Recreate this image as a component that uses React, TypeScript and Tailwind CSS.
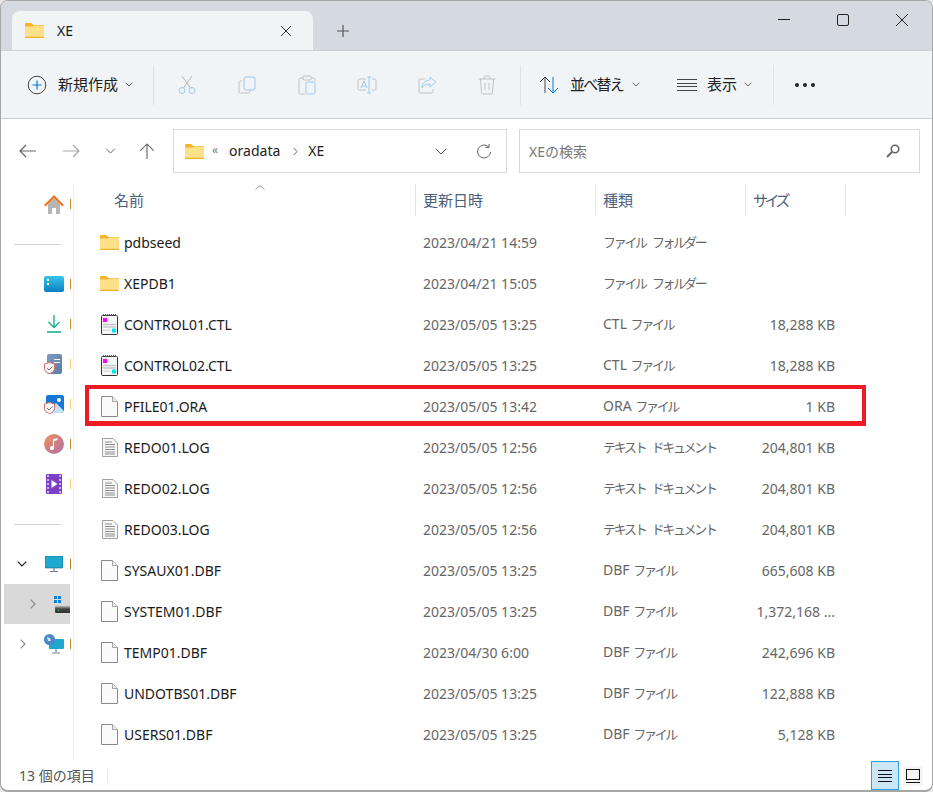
import type { ReactNode } from 'react';

const FONT = "font-['Noto_Sans','Noto_Sans_CJK_JP',sans-serif]";

const Folder = ({ className = 'w-[19px] h-[15px]' }: { className?: string }) => (
  <svg viewBox="0 0 19 15" className={className}>
    <path d="M0 1.2C0 .5.5 0 1.2 0h4.6c.5 0 .8.2 1.1.5L8.5 2H18c.6 0 1 .4 1 1v2H0z" fill="#f5b52a" />
    <path d="M0 3.6h7.6L9 2.6h9c.6 0 1 .4 1 1V14c0 .6-.4 1-1 1H1c-.6 0-1-.4-1-1z" fill="#fde08a" />
    <path d="M0 13.8h19V14c0 .6-.4 1-1 1H1c-.6 0-1-.4-1-1z" fill="#eeb12f" />
  </svg>
);

const BlankFile = () => (
  <svg viewBox="0 0 17 21" className="w-[17px] h-[21px]">
    <path d="M.5.5h11l5 5v15H.5z" fill="#fafafa" stroke="#8a8a8a" />
    <path d="M11.5.5v5h5" fill="#f0f0f0" stroke="#a5a5a5" />
  </svg>
);

const TextFile = () => (
  <svg viewBox="0 0 16 19" className="w-[16px] h-[19px]">
    <path d="M.5.5h10.5l4.5 4.5v13.5H.5z" fill="#f8f8f8" stroke="#a0a0a0" />
    <path d="M3 4h7M3 6.500h10M3 9h10M3 11.500h10M3 14h10M3 16h10" stroke="#8c8c8c" fill="none" />
  </svg>
);

const ConfigFile = () => (
  <svg viewBox="0 0 17 21" className="w-[17px] h-[21px]">
    <rect x=".5" y="1.5" width="16" height="19" rx="1" fill="#f6f6f6" stroke="#333" />
    <path d="M2 1h13" stroke="#555" strokeDasharray="1 1" strokeWidth="2" />
    <rect x="2" y="4" width="4" height="4" fill="#f0f" />
    <rect x="11" y="14.5" width="4" height="4" fill="#00e5ee" />
    <path d="M2 10.500h13M2 13h13" stroke="#c8c8c8" strokeWidth="1.4" />
    <path d="M2 16h8" stroke="#dcdcdc" strokeWidth="1.4" />
  </svg>
);

const Chevron = ({ className = '' }: { className?: string }) => (
  <svg viewBox="0 0 8 5" className={`w-[8px] h-[5px] ${className}`}>
    <path d="M.7.7 4 4 7.3.7" fill="none" stroke="#666" strokeWidth="1" />
  </svg>
);

const files = [
  { name: 'pdbseed', date: '2023/04/21 14:59', ext: '', kana: 'ファイル フォルダー', size: '', icon: 'folder' },
  { name: 'XEPDB1', date: '2023/04/21 15:05', ext: '', kana: 'ファイル フォルダー', size: '', icon: 'folder' },
  { name: 'CONTROL01.CTL', date: '2023/05/05 13:25', ext: 'CTL ', kana: 'ファイル', size: '18,288 KB', icon: 'config' },
  { name: 'CONTROL02.CTL', date: '2023/05/05 13:25', ext: 'CTL ', kana: 'ファイル', size: '18,288 KB', icon: 'config' },
  { name: 'PFILE01.ORA', date: '2023/05/05 13:42', ext: 'ORA ', kana: 'ファイル', size: '1 KB', icon: 'blank', marked: true },
  { name: 'REDO01.LOG', date: '2023/05/05 12:56', ext: '', kana: 'テキスト ドキュメント', size: '204,801 KB', icon: 'text' },
  { name: 'REDO02.LOG', date: '2023/05/05 12:56', ext: '', kana: 'テキスト ドキュメント', size: '204,801 KB', icon: 'text' },
  { name: 'REDO03.LOG', date: '2023/05/05 12:56', ext: '', kana: 'テキスト ドキュメント', size: '204,801 KB', icon: 'text' },
  { name: 'SYSAUX01.DBF', date: '2023/05/05 13:25', ext: 'DBF ', kana: 'ファイル', size: '665,608 KB', icon: 'blank' },
  { name: 'SYSTEM01.DBF', date: '2023/05/05 13:25', ext: 'DBF ', kana: 'ファイル', size: '1,372,168 ...', icon: 'blank' },
  { name: 'TEMP01.DBF', date: '2023/04/30 6:00', ext: 'DBF ', kana: 'ファイル', size: '242,696 KB', icon: 'blank' },
  { name: 'UNDOTBS01.DBF', date: '2023/05/05 13:25', ext: 'DBF ', kana: 'ファイル', size: '122,888 KB', icon: 'blank' },
  { name: 'USERS01.DBF', date: '2023/05/05 13:25', ext: 'DBF ', kana: 'ファイル', size: '5,128 KB', icon: 'blank' },
];

const FileIcon = ({ kind }: { kind: string }) => {
  if (kind === 'folder') return <Folder />;
  if (kind === 'config') return <ConfigFile />;
  if (kind === 'text') return <TextFile />;
  return <BlankFile />;
};

const Shield = () => (
  <svg viewBox="0 0 11 12" className="absolute left-0 bottom-0 w-[11px] h-[12px]">
    <path d="M5.500.5 10.500 2v4c0 3-2.500 5-5 5.500C3 11 .5 9 .5 6V2z" fill="#fff" stroke="#d9686a" />
    <path d="m3 6 2 2 3.500-3.500" fill="none" stroke="#777" />
  </svg>
);

const SideItem = ({ arrow, icon, mark, selected }: { arrow?: 'down' | 'right'; icon: ReactNode; mark?: string; selected?: boolean }) => (
  <div className={`h-10 shrink-0 flex items-center relative mx-[3px] ${selected ? 'bg-[#d9d9d9]' : ''}`}>
    {arrow === 'down' && (
      <svg viewBox="0 0 10 6" className="absolute left-[13px] w-[10px] h-[6px]">
        <path d="M.7.7 5 5 9.300.7" fill="none" stroke="#222" strokeWidth="1.200" />
      </svg>
    )}
    {arrow === 'right' && (
      <svg viewBox="0 0 6 10" className={`absolute w-[6px] h-[10px] ${selected ? 'left-[26px]' : 'left-[16px]'}`}>
        <path d="M.7.7 5 5 .7 9.300" fill="none" stroke="#8a8a8a" strokeWidth="1.200" />
      </svg>
    )}
    {icon}
    {mark && <div className={`absolute left-[66px] w-px h-2.5 ${mark}`} />}
  </div>
);

const ToolIcon = ({ children }: { children: ReactNode }) => (
  <div className="w-[60px] h-[40px] flex items-center justify-center">
    <svg viewBox="0 0 20 20" className="w-5 h-5" fill="none" strokeWidth="1">
      {children}
    </svg>
  </div>
);

const Divider = () => <div className="w-px h-[40px] bg-[#dfe2e5]" />;

export default function App() {
  return (
    <div className={`${FONT} w-[933px] h-[792px] bg-[#e8e8e8] overflow-hidden`}>
      <div className="w-full h-full flex flex-col overflow-hidden rounded-t-[8px] rounded-b-[8px] border border-b-2 border-[#a6a6a6] bg-white">
        {/* tab strip */}
        <div className="h-[50px] shrink-0 bg-[#d5dae0] flex items-end border-b border-[#cdd1d5] pl-[11px]">
          <div className="w-[301px] h-[39px] bg-[#f1f4f6] rounded-t-[8px] flex items-center pl-[13px] pr-[21px]">
            <Folder />
            <span className="ml-[13px] text-[14px] text-[#1a1a1a]">XE</span>
            <svg viewBox="0 0 12 12" className="ml-auto w-3 h-3">
              <path d="M1 1l10 10M11 1 1 11" stroke="#333" strokeWidth="1" />
            </svg>
          </div>
          <div className="h-[39px] flex items-center ml-[24px]">
            <svg viewBox="0 0 12 12" className="w-3 h-3">
              <path d="M6 0v12M0 6h12" stroke="#555" strokeWidth="1.200" />
            </svg>
          </div>
          <div className="ml-auto h-[50px] flex items-center self-start pb-[13px]">
            <div className="w-3 h-px bg-[#222] mr-[47px]" />
            <div className="w-3 h-3 border border-[#222] rounded-[2px] mr-[47px]" />
            <svg viewBox="0 0 12 12" className="w-3 h-3 mr-[24px]">
              <path d="M0 0l12 12M12 0 0 12" stroke="#222" strokeWidth="1" />
            </svg>
          </div>
        </div>

        {/* command bar */}
        <div className="h-[68px] shrink-0 bg-[#f1f4f6] border-b border-[#c9cccf] flex items-center pl-[26px]">
          <svg viewBox="0 0 20 20" className="w-5 h-5" fill="none">
            <circle cx="10" cy="10" r="8.800" stroke="#444" />
            <path d="M10 5.500v9M5.500 10h9" stroke="#0a78d4" strokeWidth="1.200" />
          </svg>
          <span className="ml-[11px] text-[15px] text-[#222]">新規作成</span>
          <Chevron className="ml-[7px] mr-[20px]" />
          <Divider />
          <div className="flex ml-[3px]">
            <ToolIcon>
              <path d="M5 1l8.500 12M15 1 6.500 13" stroke="#b6b6b6" />
              <circle cx="5" cy="15.500" r="3" stroke="#9cc9ee" />
              <circle cx="15" cy="15.500" r="3" stroke="#9cc9ee" />
            </ToolIcon>
            <ToolIcon>
              <path d="M5 6H3.500A1.500 1.500 0 0 0 2 7.500v9A1.500 1.500 0 0 0 3.500 18h8a1.500 1.500 0 0 0 1.500-1.500V15" stroke="#c0c0c0" />
              <rect x="7" y="2" width="11" height="13" rx="2" stroke="#9cc9ee" />
            </ToolIcon>
            <ToolIcon>
              <path d="M6 3H3.500A1.500 1.500 0 0 0 2 4.500v13A1.500 1.500 0 0 0 3.500 19H8M14 3h2.500A1.500 1.500 0 0 1 18 4.500V6" stroke="#c0c0c0" />
              <rect x="6" y="1" width="8" height="4" rx="1" stroke="#c0c0c0" />
              <rect x="9" y="7" width="9" height="12" rx="1.500" stroke="#9cc9ee" />
            </ToolIcon>
            <ToolIcon>
              <path d="M9 4H2.500A1.500 1.500 0 0 0 1 5.500v8A1.500 1.500 0 0 0 2.500 15H9M15 4h2.500A1.500 1.500 0 0 1 19 5.500v8a1.500 1.500 0 0 1-1.500 1.500H15" stroke="#c0c0c0" />
              <path d="M4 13l3-7 3 7M5 11h4M10 2h4M12 2v16M10 18h4" stroke="#9cc9ee" />
            </ToolIcon>
            <ToolIcon>
              <path d="M8 4H3.500A1.500 1.500 0 0 0 2 5.500v11A1.500 1.500 0 0 0 3.500 18h11a1.500 1.500 0 0 0 1.500-1.500V14" stroke="#c0c0c0" />
              <path d="M13 2l6 5-6 5V9c-4 0-6 1-8 4 0-5 3-7.500 8-8z" stroke="#9cc9ee" />
            </ToolIcon>
            <ToolIcon>
              <path d="M1.500 4h17M7 4V2.500A1.500 1.500 0 0 1 8.500 1h3A1.500 1.500 0 0 1 13 2.500V4M3.500 4l1 13.500A1.500 1.500 0 0 0 6 19h8a1.500 1.500 0 0 0 1.500-1.500l1-13.500M8 8v7M12 8v7" stroke="#c0c0c0" />
            </ToolIcon>
          </div>
          <div className="ml-[3px]"><Divider /></div>
          <svg viewBox="0 0 20 20" className="w-5 h-5 ml-[18px]" fill="none">
            <path d="M6 18V2M1 7l5-5 5 5" stroke="#444" />
            <path d="M14 2v16M9 13l5 5 5-5" stroke="#0a78d4" />
          </svg>
          <span className="ml-[11px] text-[15px] tracking-[-1.750px] text-[#222]">並べ替え</span>
          <Chevron className="ml-[9px]" />
          <svg viewBox="0 0 20 12" className="w-5 h-3 ml-[37px]">
            <path d="M0 .5h20M0 4.500h20M0 7.500h20M0 11.500h20" stroke="#444" />
          </svg>
          <span className="ml-[10px] text-[15px] text-[#222]">表示</span>
          <Chevron className="ml-[7px] mr-[21px]" />
          <Divider />
          <div className="ml-[21px] flex gap-1">
            <div className="w-1 h-1 rounded-full bg-[#222]" />
            <div className="w-1 h-1 rounded-full bg-[#222]" />
            <div className="w-1 h-1 rounded-full bg-[#222]" />
          </div>
        </div>

        {/* address row */}
        <div className="h-[65px] shrink-0 flex items-center pl-[18px] pb-[1px]">
          <svg viewBox="0 0 18 14" className="w-[18px] h-[14px]" fill="none">
            <path d="M1 7h16M7 1 1 7l6 6" stroke="#666" strokeWidth="1.200" />
          </svg>
          <svg viewBox="0 0 18 14" className="w-[18px] h-[14px] ml-[26px]" fill="none">
            <path d="M0 7h16M10 1l6 6-6 6" stroke="#a8a8a8" strokeWidth="1.200" />
          </svg>
          <svg viewBox="0 0 10 6" className="w-[11px] h-[6px] ml-[24px]" fill="none">
            <path d="M.7.7 5 5 9.300.7" stroke="#666" />
          </svg>
          <svg viewBox="0 0 16 18" className="w-[16px] h-[17px] ml-[23px]" fill="none">
            <path d="M8 17V1M1 8l7-7 7 7" stroke="#666" strokeWidth="1.200" />
          </svg>
          <div className="ml-[18px] w-[334px] h-[44px] border border-[#d9d9d9] flex items-center pl-[11px] pr-[14px]">
            <Folder />
            <span className="ml-[8px] text-[12px] text-[#777] leading-none pb-0.5">«</span>
            <span className="ml-[11px] text-[14px] text-[#222] pb-px">oradata</span>
            <svg viewBox="0 0 6 10" className="w-[5px] h-[9px] ml-[13px]" fill="none">
              <path d="M.7.7 5 5 .7 9.300" stroke="#666" strokeWidth="1.200" />
            </svg>
            <span className="ml-[10px] text-[14px] text-[#222] pb-px">XE</span>
            <svg viewBox="0 0 12 7" className="ml-auto mr-[29px] w-3 h-[7px]" fill="none">
              <path d="M.7.7 6 6 11.300.7" stroke="#555" />
            </svg>
            <svg viewBox="0 0 16 16" className="w-4 h-4" fill="none">
              <path d="M13 1v3.500H9.500M12.600 3.900A6.500 6.500 0 1 0 14.500 9" stroke="#666" />
            </svg>
          </div>
          <div className="ml-[12px] w-[401px] h-[44px] border border-[#d9d9d9] flex items-center pl-[9px] pr-[19px]">
            <span className="text-[14px] text-[#777]">XEの検索</span>
            <svg viewBox="0 0 14 14" className="ml-auto w-[14px] h-[14px]" fill="none">
              <circle cx="9" cy="5" r="3.800" stroke="#666" strokeWidth="1.600" />
              <path d="M6 8 1 13" stroke="#666" strokeWidth="2" />
            </svg>
          </div>
        </div>

        {/* body */}
        <div className="flex-1 min-h-0 flex">
          <div className="w-[73px] shrink-0 flex flex-col border-r border-[#eeeeee]">
            <SideItem
              mark="bg-[#c98a2c]"
              icon={
                <svg viewBox="0 0 20 19" className="w-5 h-[19px] ml-[40px]">
                  <path d="M4 9v9a1 1 0 0 0 1 1h3v-6h4v6h3a1 1 0 0 0 1-1V9l-6-6z" fill="#b5b5b5" />
                  <path d="M0 10 10 0l10 10-1.500 1.500L10 3l-8.500 8.500z" fill="#e8751a" />
                </svg>
              }
            />
            <div className="h-10 shrink-0 flex items-center pl-[13px]">
              <div className="w-[47px] h-px bg-[#d4d4d4]" />
            </div>
            <SideItem
              mark="bg-[#c98a2c]"
              icon={
                <div className="ml-[40px] w-5 h-4 rounded-[2px] bg-gradient-to-b from-[#39c4ea] to-[#0a7fc0] relative">
                  <div className="absolute left-[3px] top-[3px] w-[2px] h-[2px] bg-white" />
                  <div className="absolute left-[3px] top-[7px] w-[2px] h-[2px] bg-white" />
                </div>
              }
            />
            <SideItem
              mark="bg-[#c98a2c]"
              icon={
                <svg viewBox="0 0 14 18" className="w-[14px] h-[18px] ml-[43px]" fill="none">
                  <path d="M7 0v12M1.500 7 7 12.500 12.500 7" stroke="#1eb18e" strokeWidth="1.400" />
                  <path d="M0 17h14" stroke="#1eb18e" strokeWidth="1.600" />
                </svg>
              }
            />
            <SideItem
              mark="bg-[#f0d27a]"
              icon={
                <div className="ml-[40px] w-[18px] h-[20px] relative">
                  <div className="absolute right-0 top-0 w-[15px] h-5 rounded-[2px] bg-gradient-to-br from-[#7d9cc0] to-[#5a7ca5]">
                    <div className="absolute left-[7px] top-[5px] w-[6px] h-px bg-white" />
                    <div className="absolute left-[7px] top-[8px] w-[6px] h-px bg-white" />
                  </div>
                  <Shield />
                </div>
              }
            />
            <SideItem
              mark="bg-[#f0d27a]"
              icon={
                <div className="ml-[40px] w-[20px] h-[19px] relative">
                  <svg viewBox="0 0 18 18" className="absolute right-0 top-0 w-[18px] h-[18px]">
                    <rect width="18" height="18" rx="2" fill="#1579d4" />
                    <circle cx="13" cy="5" r="2" fill="#fff" />
                    <path d="M2 18 10 8l8 8v2z" fill="#bfe2f8" />
                  </svg>
                  <Shield />
                </div>
              }
            />
            <SideItem
              mark="bg-[#c98a2c]"
              icon={
                <div className="ml-[40px] w-5 h-5 rounded-full bg-gradient-to-br from-[#ee8f4e] to-[#b06fa8] flex items-center justify-center">
                  <svg viewBox="0 0 10 12" className="w-[10px] h-3">
                    <path d="M4 1.500 8.500 0v2L5 3v7a2 2 0 1 1-1-1.700z" fill="#fff" />
                  </svg>
                </div>
              }
            />
            <SideItem
              mark="bg-[#f0d27a]"
              icon={
                <svg viewBox="0 0 16 20" className="w-4 h-5 ml-[42px]">
                  <rect width="16" height="20" rx="1" fill="#7d3fc4" />
                  <path d="M1 2h2M1 6h2M1 10h2M1 14h2M1 18h2M13 2h2M13 6h2M13 10h2M13 14h2M13 18h2" stroke="#e9d9f8" strokeWidth="1.400" />
                  <path d="M5.500 6v8l6-4z" fill="#fff" />
                </svg>
              }
            />
            <div className="h-10 shrink-0 flex items-center pl-[13px]">
              <div className="w-[47px] h-px bg-[#d4d4d4]" />
            </div>
            <SideItem
              arrow="down"
              mark="bg-[#b97a20]"
              icon={
                <svg viewBox="0 0 18 16" className="w-[18px] h-4 ml-[41px]">
                  <rect width="18" height="12" rx="1" fill="#1fa9cf" stroke="#0f5f80" strokeWidth=".6" />
                  <path d="M9 12v3M5 15.500h8" stroke="#6b8596" strokeWidth="1.200" />
                </svg>
              }
            />
            <SideItem
              selected
              arrow="right"
              icon={
                <div className="ml-[50px] w-[17px] h-[17px] relative overflow-hidden">
                  <div className="absolute left-0 top-0 grid grid-cols-2 gap-px w-[7px]">
                    <div className="h-[3px] bg-[#0a84d8]" />
                    <div className="h-[3px] bg-[#0a84d8]" />
                    <div className="h-[3px] bg-[#0a84d8]" />
                    <div className="h-[3px] bg-[#0a84d8]" />
                  </div>
                  <div className="absolute left-[1px] bottom-0 w-[18px] h-[8px] bg-gradient-to-b from-[#e8e8e8] via-[#444] to-[#333] rounded-[1px]">
                    <div className="absolute left-[3px] bottom-[2px] w-px h-px bg-[#30d050]" />
                  </div>
                </div>
              }
            />
            <SideItem
              arrow="right"
              mark="bg-[#c98a2c]"
              icon={
                <svg viewBox="0 0 20 20" className="w-5 h-5 ml-[40px]">
                  <rect x="5" y="5" width="15" height="10" rx="1" fill="#1fa9cf" />
                  <path d="M12 15v3M8 19h8" stroke="#6b8596" strokeWidth="1.200" />
                  <circle cx="5.500" cy="5.500" r="5.500" fill="#4b86c6" />
                  <path d="M3 3l3 1 1 3-3 0z" fill="#cfe5f5" />
                </svg>
              }
            />
          </div>

          {/* file list */}
          <div className="flex-1 min-w-0 flex flex-col pl-[12px]">
            <div className="h-[32px] shrink-0 flex relative text-[15px] text-[#4c607a]">
              <svg viewBox="0 0 10 5" className="absolute left-[169px] top-[1px] w-[10px] h-[5px]" fill="none">
                <path d="M.5 4.500 5 .5l4.500 4" stroke="#999" />
              </svg>
              <div className="w-[330px] border-r border-[#e5e5e5] pl-[28px] flex items-center">名前</div>
              <div className="w-[180px] border-r border-[#e5e5e5] pl-[7px] flex items-center">更新日時</div>
              <div className="w-[150px] border-r border-[#e5e5e5] pl-[7px] flex items-center">種類</div>
              <div className="w-[100px] border-r border-[#e5e5e5] pl-[7px] flex items-center tracking-[-3.500px]">サイズ</div>
            </div>
            <div className="mt-[6px] flex flex-col">
              {files.map((f) => (
                <div key={f.name} className="h-[41px] shrink-0 flex items-center relative text-[14px]">
                  {f.marked && (
                    <div className="absolute -left-px -top-px w-[781px] h-[41px] border-4 border-b-[5px] border-[#ed1c24]" />
                  )}
                  <div className="w-[330px] flex items-center pl-[14px]">
                    <div className="w-[19px] flex justify-center shrink-0">
                      <FileIcon kind={f.icon} />
                    </div>
                    <span className="ml-[5px] text-[#1a1a1a] whitespace-nowrap">{f.name}</span>
                  </div>
                  <div className="w-[180px] pl-[7px] text-[#666] whitespace-nowrap">{f.date}</div>
                  <div className="w-[150px] pl-[7px] pb-px text-[#666] whitespace-pre">
                    {f.ext}
                    <span className="text-[13px] tracking-[-2.300px] [word-spacing:5px]">{f.kana}</span>
                  </div>
                  <div className="w-[89px] text-right text-[#666] whitespace-nowrap">{f.size}</div>
                </div>
              ))}
            </div>
          </div>
        </div>

        {/* status bar */}
        <div className="h-[29px] shrink-0 flex items-center pl-[18px] pr-[9px]">
          <span className="text-[14px] text-[#555] w-[88px] whitespace-nowrap">13 個の項目</span>
          <div className="w-px h-[13px] bg-[#e8e8e8]" />
          <div className="ml-auto w-[28px] h-[29px] border border-[#2aa0e6] bg-[#cbe6f5] flex items-center justify-center">
            <svg viewBox="0 0 14 12" className="w-[14px] h-3">
              <path d="M0 .5h14M0 4.500h14M0 7.500h14M0 11.500h14" stroke="#111" />
            </svg>
          </div>
          <div className="ml-[4px] w-[20px] h-[20px] bg-[#f5f5f5] rounded-[2px] flex items-center justify-center">
            <svg viewBox="0 0 14 14" className="w-[14px] h-[14px]" fill="none">
              <rect x=".5" y=".5" width="13" height="10" stroke="#111" />
              <path d="M0 13.500h14" stroke="#111" />
            </svg>
          </div>
        </div>
      </div>
    </div>
  );
}
